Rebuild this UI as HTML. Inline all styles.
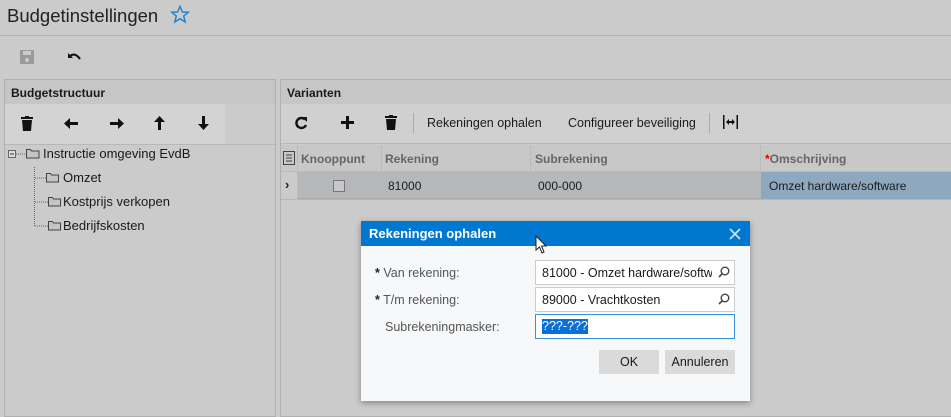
<!DOCTYPE html>
<html><head><meta charset="utf-8"><style>
*{box-sizing:border-box;margin:0;padding:0}
body{width:951px;height:417px;overflow:hidden;background:#cbcbcb;font-family:"Liberation Sans",sans-serif;font-size:12px;color:#1a1a1a;position:relative}
.a{position:absolute}
</style></head><body>
<div class="a" style="left:0;top:0;width:951px;height:36px;border-bottom:1px solid #b4b4b4"></div>
<div class="a" style="left:7px;top:5px;font-size:18.5px;color:#222">Budgetinstellingen</div>
<svg class="a" style="left:170px;top:5px" width="20" height="19" viewBox="0 0 20 19"><polygon points="10,1.5 12.4,7 18.2,7.3 13.7,11 15.2,17 10,13.7 4.8,17 6.3,11 1.8,7.3 7.6,7" fill="none" stroke="#2a82c8" stroke-width="1.5"/></svg>
<svg class="a" style="left:20px;top:50px" width="14" height="14"><rect x="0" y="0" width="14" height="14" rx="1" fill="#9a9a9a"/><rect x="3" y="1" width="8" height="4" fill="#cbcbcb"/><circle cx="7" cy="10" r="2" fill="#cbcbcb"/></svg>
<svg class="a" style="left:65px;top:51px" width="16" height="12" viewBox="0 0 16 12"><path d="M3 2 L3 7 L8 7 Z" fill="#111"/><path d="M5 5 Q10 1 15 8" fill="none" stroke="#111" stroke-width="2.2"/></svg>

<!-- left panel -->
<div class="a" style="left:4px;top:79px;width:272px;height:338px;border:1px solid #b0b0b0;background:#cbcbcb"></div>
<div class="a" style="left:5px;top:80px;width:270px;height:24px;background:#c6c6c6"></div>
<div class="a" style="left:11px;top:86px;font-weight:bold;font-size:12px">Budgetstructuur</div>
<div class="a" style="left:5px;top:104px;width:220px;height:40px;background:#d3d3d3"></div>
<div class="a" style="left:5px;top:144px;width:270px;height:1px;background:#b8b8b8"></div>
<svg class="a" style="left:21px;top:116px" width="12" height="15"><rect x="0" y="1" width="12" height="2" fill="#111"/><rect x="4" y="0" width="4" height="2" fill="#111"/><path d="M1 4 H11 L10 15 H2Z" fill="#111"/></svg>
<svg class="a" style="left:64px;top:117px" width="14" height="13"><path d="M0 6.5 L6 1 V5 H14 V8 H6 V12Z" fill="#111"/></svg>
<svg class="a" style="left:110px;top:117px" width="14" height="13"><path d="M14 6.5 L8 1 V5 H0 V8 H8 V12Z" fill="#111"/></svg>
<svg class="a" style="left:153px;top:116px" width="13" height="14"><path d="M6.5 0 L1 6 H5 V14 H8 V6 H12Z" fill="#111"/></svg>
<svg class="a" style="left:197px;top:116px" width="13" height="14"><path d="M6.5 14 L1 8 H5 V0 H8 V8 H12Z" fill="#111"/></svg>
<!-- tree -->
<svg class="a" style="left:0;top:145px" width="62" height="90">
<rect x="8.5" y="5.5" width="7" height="7" fill="#ddd" stroke="#666"/><line x1="10" y1="9" x2="14" y2="9" stroke="#333"/>
<line x1="16" y1="9" x2="26" y2="9" stroke="#666" stroke-dasharray="1,1"/>
<line x1="34.5" y1="22" x2="34.5" y2="81" stroke="#666" stroke-dasharray="1,1"/>
<line x1="35" y1="33" x2="46" y2="33" stroke="#666" stroke-dasharray="1,1"/>
<line x1="35" y1="57" x2="48" y2="57" stroke="#666" stroke-dasharray="1,1"/>
<line x1="35" y1="81" x2="48" y2="81" stroke="#666" stroke-dasharray="1,1"/>
<g fill="#c4c4c4" stroke="#444"><path d="M26.5 4.5h4l1 1.5h7.5v7h-12.5z"/><path d="M46.5 28.5h4l1 1.5h7v7h-12z"/><path d="M48.5 52.5h4l1 1.5h7v7h-12z"/><path d="M48.5 76.5h4l1 1.5h7v7h-12z"/></g>
</svg>
<div class="a" style="left:43px;top:146px;font-size:13px">Instructie omgeving EvdB</div>
<div class="a" style="left:63px;top:170px;font-size:13px">Omzet</div>
<div class="a" style="left:63px;top:194px;font-size:13px">Kostprijs verkopen</div>
<div class="a" style="left:63px;top:218px;font-size:13px">Bedrijfskosten</div>

<!-- right panel -->
<div class="a" style="left:280px;top:79px;width:680px;height:338px;border:1px solid #b0b0b0;background:#cbcbcb"></div>
<div class="a" style="left:281px;top:80px;width:670px;height:24px;background:#c6c6c6"></div>
<div class="a" style="left:287px;top:86px;font-weight:bold;font-size:12px">Varianten</div>
<div class="a" style="left:281px;top:104px;width:670px;height:40px;background:#d0d0d0;border-bottom:1px solid #b8b8b8"></div>
<svg class="a" style="left:294px;top:116px" width="14" height="14"><path d="M11 3.5 A5 5 0 1 0 12 9" fill="none" stroke="#111" stroke-width="2.4"/><path d="M8 1 L13 1 L13 6Z" fill="#111"/></svg>
<svg class="a" style="left:341px;top:116px" width="13" height="13"><rect x="5" y="0" width="3" height="13" fill="#111"/><rect x="0" y="5" width="13" height="3" fill="#111"/></svg>
<svg class="a" style="left:385px;top:115px" width="12" height="15"><rect x="0" y="1" width="12" height="2" fill="#111"/><rect x="4" y="0" width="4" height="2" fill="#111"/><path d="M1 4 H11 L10 15 H2Z" fill="#111"/></svg>
<div class="a" style="left:413px;top:113px;width:1px;height:20px;background:#aaa"></div>
<div class="a" style="left:427px;top:116px;font-size:12.5px">Rekeningen ophalen</div>
<div class="a" style="left:568px;top:116px;font-size:12.5px">Configureer beveiliging</div>
<div class="a" style="left:709px;top:113px;width:1px;height:20px;background:#aaa"></div>
<svg class="a" style="left:723px;top:115px" width="15" height="14"><rect x="0" y="0" width="1.5" height="14" fill="#111"/><rect x="13.5" y="0" width="1.5" height="14" fill="#111"/><path d="M3 7 L6 4 V6 H9 V4 L12 7 L9 10 V8 H6 V10Z" fill="#111"/></svg>
<!-- grid header -->
<div class="a" style="left:281px;top:145px;width:670px;height:27px;background:#c8c8c8;border-bottom:1px solid #bbb"></div>
<div class="a" style="left:297px;top:145px;width:1px;height:54px;background:#bbb"></div>
<div class="a" style="left:381px;top:145px;width:1px;height:27px;background:#bbb"></div>
<div class="a" style="left:530px;top:145px;width:1px;height:27px;background:#bbb"></div>
<div class="a" style="left:760px;top:145px;width:1px;height:27px;background:#bbb"></div>
<svg class="a" style="left:283px;top:151px" width="12" height="14"><rect x="0.5" y="0.5" width="11" height="13" fill="none" stroke="#444"/><path d="M3 4h6M3 7h6M3 10h6" stroke="#444"/></svg>
<div class="a" style="left:301px;top:152px;font-weight:bold;color:#666">Knooppunt</div>
<div class="a" style="left:385px;top:152px;font-weight:bold;color:#666">Rekening</div>
<div class="a" style="left:535px;top:152px;font-weight:bold;color:#666">Subrekening</div>
<div class="a" style="left:765px;top:152px;font-weight:bold;color:#666"><span style="color:#d00">*</span>Omschrijving</div>
<!-- row -->
<div class="a" style="left:298px;top:172px;width:463px;height:27px;background:#b5b7ba;border-bottom:1px solid #aaa"></div>
<div class="a" style="left:761px;top:172px;width:190px;height:27px;background:#8da8bf"></div>
<div class="a" style="left:281px;top:199px;width:670px;height:1px;background:#b8b8b8"></div>
<div class="a" style="left:285px;top:177px;font-weight:bold;font-size:13px">›</div>
<div class="a" style="left:333px;top:180px;width:12px;height:12px;border:1px solid #777;background:#c8c8c8"></div>
<div class="a" style="left:388px;top:179px">81000</div>
<div class="a" style="left:538px;top:179px">000-000</div>
<div class="a" style="left:769px;top:179px">Omzet hardware/software</div>

<!-- dialog -->
<div class="a" style="left:361px;top:221px;width:389px;height:180px;background:#f7f8fa;box-shadow:0 2px 6px rgba(0,0,0,.35)"></div>
<div class="a" style="left:361px;top:221px;width:389px;height:25px;background:#0078d0"></div>
<div class="a" style="left:369px;top:226px;color:#fff;font-weight:bold;font-size:13px">Rekeningen ophalen</div>
<svg class="a" style="left:729px;top:228px" width="12" height="12"><path d="M1 1L11 11M11 1L1 11" stroke="#cfe4f5" stroke-width="1.6"/></svg>
<svg class="a" style="left:535px;top:235px" width="13" height="20"><path d="M1 1 V15 L4.5 12 L7 18 L9 17 L6.5 11 H11Z" fill="#fff" stroke="#222"/></svg>
<div class="a" style="left:375px;top:266px;color:#555;font-size:12.5px"><b style="color:#222">*</b> Van rekening:</div>
<div class="a" style="left:375px;top:293px;color:#555;font-size:12.5px"><b style="color:#222">*</b> T/m rekening:</div>
<div class="a" style="left:385px;top:320px;color:#555;font-size:12.5px">Subrekeningmasker:</div>
<div class="a" style="left:535px;top:260px;width:200px;height:25px;background:#fff;border:1px solid #ccc"></div>
<div class="a" style="left:542px;top:266px;font-size:12.5px;width:170px;overflow:hidden;white-space:nowrap">81000 - Omzet hardware/software</div>
<div class="a" style="left:535px;top:287px;width:200px;height:25px;background:#fff;border:1px solid #ccc"></div>
<div class="a" style="left:542px;top:293px;font-size:12.5px">89000 - Vrachtkosten</div>
<svg class="a" style="left:718px;top:266px" width="12" height="12"><circle cx="7" cy="5" r="3.8" fill="none" stroke="#444" stroke-width="1.4"/><path d="M4.3 7.7L1 11" stroke="#444" stroke-width="1.6"/></svg>
<svg class="a" style="left:718px;top:293px" width="12" height="12"><circle cx="7" cy="5" r="3.8" fill="none" stroke="#444" stroke-width="1.4"/><path d="M4.3 7.7L1 11" stroke="#444" stroke-width="1.6"/></svg>
<div class="a" style="left:535px;top:314px;width:200px;height:25px;background:#fff;border:1px solid #3b8ed8"></div>
<div class="a" style="left:542px;top:319px;font-size:12.5px;background:#0a6fd6;color:#fff;line-height:15px">???-???</div>
<div class="a" style="left:599px;top:350px;width:60px;height:24px;background:#dadada;text-align:center;line-height:24px;font-size:12.5px">OK</div>
<div class="a" style="left:665px;top:350px;width:70px;height:24px;background:#dadada;text-align:center;line-height:24px;font-size:12.5px">Annuleren</div>
</body></html>
